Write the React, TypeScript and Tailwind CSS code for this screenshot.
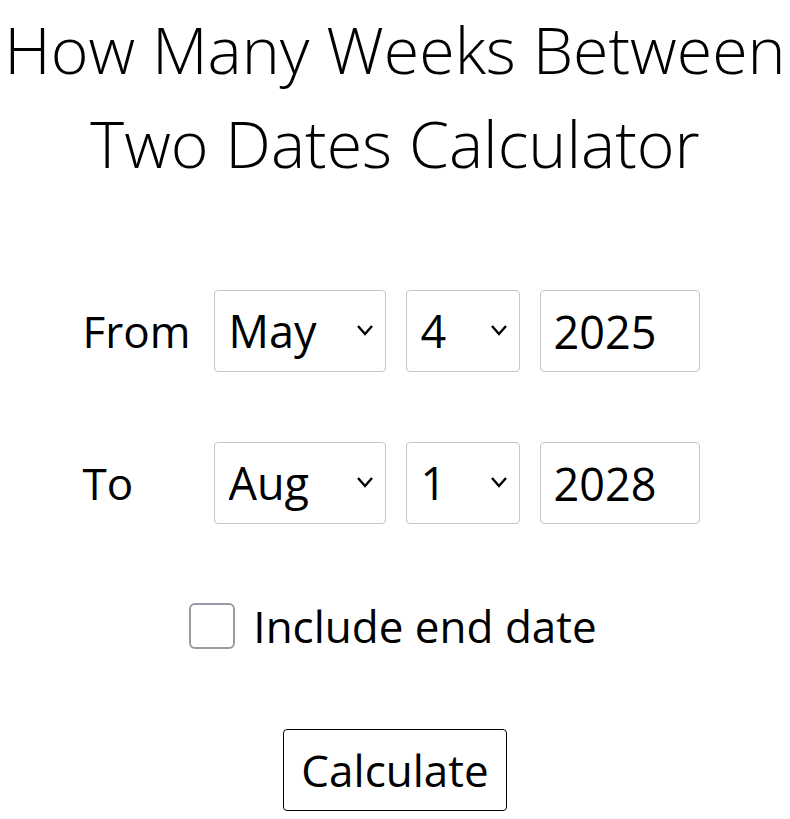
import React, { useState } from 'react';

const months = ['Jan', 'Feb', 'Mar', 'Apr', 'May', 'Jun', 'Jul', 'Aug', 'Sep', 'Oct', 'Nov', 'Dec'];
const days = Array.from({ length: 31 }, (_, i) => String(i + 1));

const Chevron = () => (
  <span className="pointer-events-none absolute right-[12px] top-[34px] z-10 block h-[12px] w-[18px]">
    <svg width="18" height="12" viewBox="0 0 18 12" fill="none">
      <path d="M2 2l7 8 7-8" stroke="#000" strokeWidth="2.4" />
    </svg>
  </span>
);

const Select = ({
  value,
  options,
  onChange,
  width,
}: {
  value: string;
  options: string[];
  onChange: (v: string) => void;
  width: string;
}) => (
  <div className={`relative rounded-[4px] bg-white ${width}`}>
    <select
      value={value}
      onChange={(e) => onChange(e.target.value)}
      className="block h-[82px] w-full appearance-none rounded-[4px] border border-[#c6c6c6] bg-transparent pl-[14px] text-[45px] text-black outline-none [background-image:none]"
    >
      {options.map((o) => (
        <option key={o} value={o}>
          {o}
        </option>
      ))}
    </select>
    <Chevron />
  </div>
);

const DateRow = ({
  label,
  month,
  day,
  year,
}: {
  label: string;
  month: string;
  day: string;
  year: string;
}) => {
  const [m, setM] = useState(month);
  const [d, setD] = useState(day);
  const [y, setY] = useState(year);
  return (
    <div className="flex items-center">
      <span className="w-[131px] text-[44px]">{label}</span>
      <Select value={m} options={months} onChange={setM} width="w-[172px]" />
      <div className="ml-[20px]">
        <Select value={d} options={days} onChange={setD} width="w-[114px]" />
      </div>
      <input
        value={y}
        onChange={(e) => setY(e.target.value)}
        className="ml-[20px] h-[82px] w-[160px] rounded-[4px] border border-[#c6c6c6] bg-white pl-[13px] text-[45px] text-black outline-none"
      />
    </div>
  );
};

export default function App() {
  const [includeEnd, setIncludeEnd] = useState(false);

  return (
    <div className="min-h-screen bg-white text-black [font-family:'Open_Sans',sans-serif]">
      <h1 className="pt-[2px] text-center text-[64.5px] font-light leading-[94px]">
        How Many Weeks Between
        <br />
        Two Dates Calculator
      </h1>

      <div className="mt-[100px] flex flex-col items-center gap-[70px] pr-[8px]">
        <DateRow label="From" month="May" day="4" year="2025" />
        <DateRow label="To" month="Aug" day="1" year="2028" />
      </div>

      <label className="mt-[79px] flex h-[46px] items-center justify-center gap-[18px] pr-[4px]">
        <input
          type="checkbox"
          checked={includeEnd}
          onChange={(e) => setIncludeEnd(e.target.checked)}
          className="h-[46px] w-[46px] appearance-none rounded-[6px] border-2 border-[#9b9ba6] bg-white"
        />
        <span className="text-[44px]">Include end date</span>
      </label>

      <div className="mt-[80px] flex justify-center">
        <button className="h-[82px] w-[224px] rounded-[4px] border-[1.5px] border-black bg-white text-[44px]">
          Calculate
        </button>
      </div>
    </div>
  );
}
